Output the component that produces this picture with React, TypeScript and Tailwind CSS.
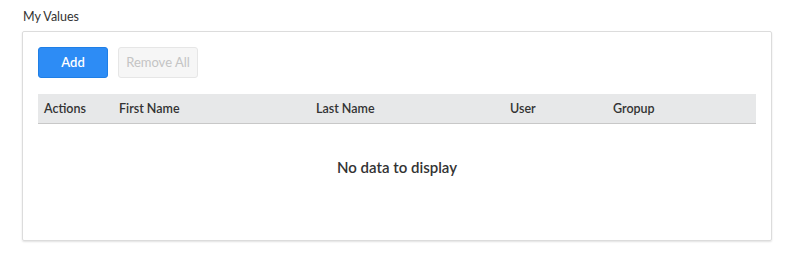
export default function App() {
  const columns = [
    { label: "Actions", width: "w-[75px]" },
    { label: "First Name", width: "w-[197px]" },
    { label: "Last Name", width: "w-[194px]" },
    { label: "User", width: "w-[103px]" },
    { label: "Gropup", width: "flex-1" },
  ];

  return (
    <main
      className="min-h-screen bg-white pl-[22px] pr-[25px] pt-[8px] text-[#333]"
      style={{ fontFamily: "Lato, 'Open Sans', sans-serif" }}
    >
      <h2 className="pl-px text-[12.5px] leading-[18px] text-[#333]">My Values</h2>

      <section className="mt-[5px] w-[750px] rounded-[2px] border border-[#dcdcdc] p-[15px] shadow-[0_1px_2px_rgba(0,0,0,0.12)]">
        <div className="flex gap-[10px]">
          <button className="h-[31px] w-[70px] rounded-[3px] border border-[#1f7fe6] bg-[#2d8cf5] text-[13px] font-semibold text-white">
            Add
          </button>
          <button
            disabled
            className="h-[31px] w-[80px] rounded-[3px] border border-[#e6e6e6] bg-[#f6f6f6] text-[13px] text-[#c4c4c4]"
          >
            Remove All
          </button>
        </div>

        <div className="mt-[16px]">
          <div className="flex h-[30px] items-center border-b border-[#c8c8c8] bg-[#e7e8e9] pl-[6px] pt-px text-[12.5px] font-semibold text-[#333]">
            {columns.map((col) => (
              <div key={col.label} className={col.width}>
                {col.label}
              </div>
            ))}
          </div>

          <div className="flex h-[101px] justify-center pt-[33px] text-[15px] font-semibold leading-[20px] text-[#333]">
            No data to display
          </div>
        </div>
      </section>
    </main>
  );
}
